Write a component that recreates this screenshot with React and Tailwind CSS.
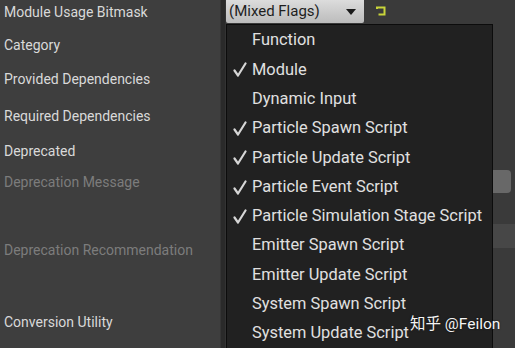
import React from "react";

const labels = [
  { t: "Module Usage Bitmask", h: "h-[25px]", dim: false },
  { t: "Category", h: "h-[40px]", dim: false },
  { t: "Provided Dependencies", h: "h-[28px]", dim: false },
  { t: "Required Dependencies", h: "h-[46px]", dim: false },
  { t: "Deprecated", h: "h-[24px]", dim: false },
  { t: "Deprecation Message", h: "h-[38px]", dim: true },
  { t: "Deprecation Recommendation", h: "h-[98px]", dim: true },
  { t: "Conversion Utility", h: "h-[46px]", dim: false },
];

const items = [
  ["Function", false],
  ["Module", true],
  ["Dynamic Input", false],
  ["Particle Spawn Script", true],
  ["Particle Update Script", true],
  ["Particle Event Script", true],
  ["Particle Simulation Stage Script", true],
  ["Emitter Spawn Script", false],
  ["Emitter Update Script", false],
  ["System Spawn Script", false],
  ["System Update Script", false],
];

function Check() {
  return (
    <svg width="14" height="15" viewBox="0 0 14 15" className="block">
      <path d="M1.5 8.5 L5 13.5 L12.5 1.5" fill="none" stroke="#d6d6d6" strokeWidth="2.2" strokeLinecap="round" strokeLinejoin="round" />
    </svg>
  );
}

export default function App() {
  return (
    <div
      className="relative w-[515px] h-[348px] overflow-hidden bg-[#3a3a3a] flex"
      style={{ fontFamily: "Roboto, 'Noto Sans CJK SC', sans-serif" }}
    >
      {/* label column */}
      <div className="w-[220px] shrink-0 bg-[#3e3e3e] flex flex-col">
        {labels.map((l) => (
          <div key={l.t} className={`${l.h} flex items-center pl-[4px] text-[14px] ${l.dim ? "text-[#7c7c7c]" : "text-[#d9d9d9]"}`}>
            {l.t}
          </div>
        ))}
      </div>
      {/* divider */}
      <div className="w-[1px] bg-[#353535]" />
      <div className="w-[4px] bg-[#2a2a2a]" />
      <div className="w-[1px] bg-[#333333]" />
      {/* value column */}
      <div className="flex-1 flex flex-col">
        <div className="h-[24px] flex items-start">
          <div className="w-[138px] h-[23px] bg-gradient-to-b from-[#dcdcdc] to-[#bcbcbc] flex items-center justify-between pl-[3px] pr-[8px] text-[15px] text-[#1e1e1e] rounded-b-[2px]">
            <span>(Mixed Flags)</span>
            <svg width="10" height="6" viewBox="0 0 10 6"><path d="M0 0 H10 L5 6 Z" fill="#1a1a1a" /></svg>
          </div>
          <div className="ml-[11px] mt-[5px]">
            <svg width="12" height="12" viewBox="0 0 12 12">
              <path d="M2 1.5 V4 M2 2.5 H9.5 V9.5 H3.5" fill="none" stroke="#c8d43a" strokeWidth="2" />
            </svg>
          </div>
        </div>
        <div className="h-[146px]" />
        <div className="h-[23px] flex justify-end pr-[4px]">
          <div className="w-[60px] h-full bg-[#686868] rounded-[4px]" />
        </div>
        <div className="h-[31px]" />
        <div className="h-[24px] bg-[#474747]" />
      </div>

      {/* dropdown menu */}
      <div className="absolute left-[226px] top-[24px] w-[267px] h-[340px] bg-[#212121] border border-[#0c0c0c] flex flex-col pt-[1px]">
        {items.map(([t, c]) => (
          <div key={t} className="h-[29.3px] shrink-0 flex items-center text-[16.4px] text-[#e0e0e0]">
            <div className="w-[25px] pl-[6px] flex items-center">{c ? <Check /> : null}</div>
            <span>{t}</span>
          </div>
        ))}
      </div>

      {/* watermark */}
      <div className="absolute left-[410px] top-[313px] text-[15.5px] text-[#f4f4f4] [text-shadow:0_0_2px_rgba(0,0,0,0.6)]">
        知乎 @Feilon
      </div>
    </div>
  );
}
